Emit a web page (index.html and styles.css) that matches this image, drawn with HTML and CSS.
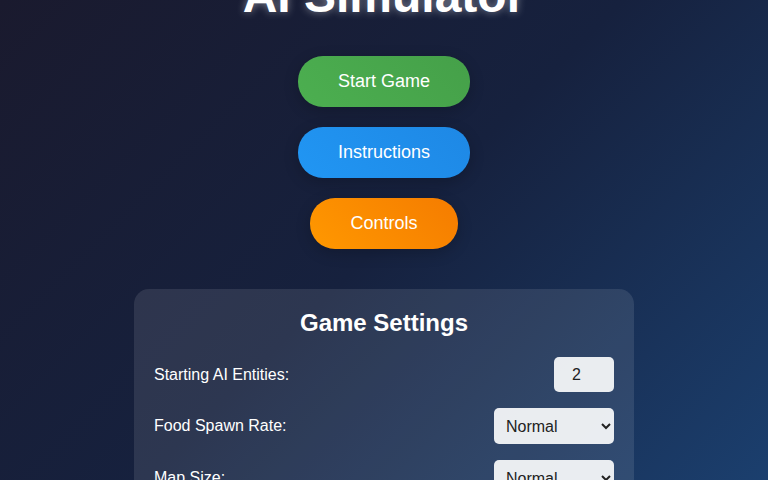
FILE: index.html
```html
<!DOCTYPE html>
<html lang="en">
<head>
    <meta charset="UTF-8">
    <meta name="viewport" content="width=device-width, initial-scale=1.0">
    <title>AI Simulator</title>
    <link rel="stylesheet" href="styles.css">
</head>
<body>

    <main id="menu">

        <h1>AI Simulator</h1>

        <section class="buttons">
            <button class="btn start">Start Game</button>
            <button class="btn info">Instructions</button>
            <button class="btn controls">Controls</button>
        </section>

        <section class="settings">
            <h2>Game Settings</h2>

            <div class="row">
                <label for="entities">Starting AI Entities:</label>
                <input type="number" id="entities" value="2" min="1" max="10">
            </div>

            <div class="row">
                <label for="food">Food Spawn Rate:</label>
                <select id="food">
                    <option>Low</option>
                    <option selected>Normal</option>
                    <option>High</option>
                </select>
            </div>

            <div class="row">
                <label for="map">Map Size:</label>
                <select id="map">
                    <option>Small</option>
                    <option selected>Normal</option>
                    <option>Large</option>
                </select>
            </div>
        </section>

    </main>

</body>
</html>
```

FILE: styles.css
```css
html {
    height: 100%;
}

body {
    margin: 0;
    height: 100vh;
    font-family: 'Liberation Sans', Arial, sans-serif;
    background: linear-gradient(135deg, #1a1a2e 0%, #16213e 50%, #1b3f6e 100%);
    color: white;
    overflow: hidden;
}

#menu {
    display: flex;
    flex-direction: column;
    align-items: center;
}

h1 {
    font-size: 48px;
    margin: -32px 0 33px;
    text-shadow: 0 0 8px rgba(255, 255, 255, 0.45);
}

.buttons {
    display: flex;
    flex-direction: column;
    align-items: center;
    gap: 20px;
}

.btn {
    font-family: inherit;
    font-size: 18px;
    color: white;
    border: none;
    border-radius: 25px;
    padding: 15px 40px;
    cursor: pointer;
    box-shadow: 0 4px 15px rgba(0, 0, 0, 0.2);
}

.start {
    background: linear-gradient(45deg, #4caf50, #45a049);
}

.info {
    background: linear-gradient(45deg, #2196f3, #1e88e5);
}

.controls {
    background: linear-gradient(45deg, #ff9800, #f57c00);
}

.settings {
    box-sizing: border-box;
    width: 500px;
    margin-top: 40px;
    padding: 20px;
    background: rgba(255, 255, 255, 0.1);
    border-radius: 15px;
}

.settings h2 {
    text-align: center;
    font-size: 24px;
    margin: 0 0 20px;
}

.row {
    display: flex;
    justify-content: space-between;
    align-items: center;
    margin-bottom: 16px;
}

.row label {
    font-size: 16px;
}

.row input,
.row select {
    box-sizing: border-box;
    font-family: inherit;
    font-size: 16px;
    padding: 8px;
    border: none;
    border-radius: 5px;
    background: rgba(255, 255, 255, 0.9);
    color: #222;
}

.row input {
    width: 60px;
    height: 35px;
    text-align: center;
}

.row select {
    width: 120px;
    height: 36px;
}
```
